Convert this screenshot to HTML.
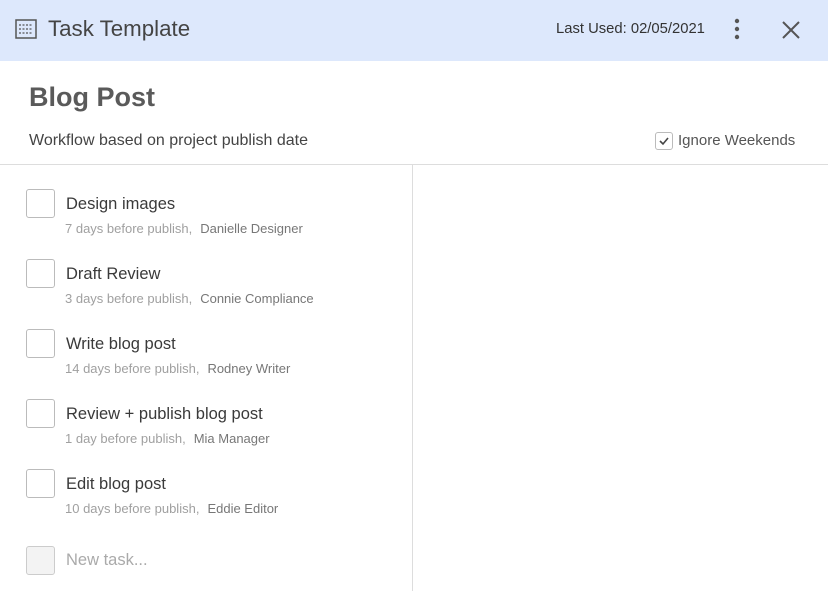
<!DOCTYPE html>
<html><head><meta charset="utf-8"><style>
*{margin:0;padding:0;box-sizing:border-box}
body{width:828px;height:591px;background:#fff;font-family:"Liberation Sans",Arial,sans-serif;position:relative;overflow:hidden;color:#444}
.hdr{position:absolute;left:0;top:0;width:828px;height:61px;background:#dde8fc}
.abs{position:absolute;white-space:nowrap}
.cb{position:absolute;left:26px;width:29px;height:29px;border:1px solid #bbb;border-radius:3px;background:#fff}
.t{position:absolute;left:66px;font-size:16.5px;color:#3a3a3a}
.s{position:absolute;left:65px;font-size:13px;color:#a0a0a0}
.s b{font-weight:normal;color:#777;margin-left:8px}
</style></head><body>
<div class="hdr"></div>
<svg class="abs" style="left:15px;top:19px" width="22" height="20" viewBox="0 0 22 20"><rect x="1" y="1" width="20" height="18" fill="none" stroke="#555" stroke-width="1.5"/><g stroke="#555" stroke-width="1.3" stroke-dasharray="2 1.5"><line x1="4" y1="6" x2="18" y2="6"/><line x1="4" y1="10" x2="18" y2="10"/><line x1="4" y1="14" x2="18" y2="14"/></g></svg>
<div class="abs" style="left:48px;top:16px;font-size:22.3px;color:#444">Task Template</div>
<div class="abs" style="left:556px;top:21px;font-size:14.8px;color:#333">Last Used: 02/05/2021</div>
<svg class="abs" style="left:733px;top:18px" width="8" height="22"><circle cx="4" cy="3" r="2.2" fill="#555"/><circle cx="4" cy="11" r="2.2" fill="#555"/><circle cx="4" cy="19" r="2.2" fill="#555"/></svg>
<svg class="abs" style="left:781px;top:20px" width="20" height="20"><path d="M2 2L18 18M18 2L2 18" stroke="#555" stroke-width="2"/></svg>
<div class="abs" style="left:29px;top:82px;font-size:27px;font-weight:bold;color:#5a5a5a">Blog Post</div>
<div class="abs" style="left:29px;top:132px;font-size:16px;color:#444">Workflow based on project publish date</div>
<div class="abs" style="left:655px;top:132px;width:18px;height:18px;border:1px solid #bbb;border-radius:3px"></div>
<svg class="abs" style="left:657px;top:134px" width="14" height="14"><path d="M3 7l3 3 5-6" stroke="#444" stroke-width="1.6" fill="none"/></svg>
<div class="abs" style="left:678px;top:132px;font-size:15px;color:#555">Ignore Weekends</div>
<div class="abs" style="left:0;top:164px;width:828px;height:1px;background:#ddd"></div>
<div class="abs" style="left:412px;top:165px;width:1px;height:426px;background:#ddd"></div>

<div class="cb" style="top:189px"></div><div class="t" style="top:195px">Design images</div><div class="s" style="top:221px">7 days before publish,<b>Danielle Designer</b></div>
<div class="cb" style="top:259px"></div><div class="t" style="top:265px">Draft Review</div><div class="s" style="top:291px">3 days before publish,<b>Connie Compliance</b></div>
<div class="cb" style="top:329px"></div><div class="t" style="top:335px">Write blog post</div><div class="s" style="top:361px">14 days before publish,<b>Rodney Writer</b></div>
<div class="cb" style="top:399px"></div><div class="t" style="top:405px">Review + publish blog post</div><div class="s" style="top:431px">1 day before publish,<b>Mia Manager</b></div>
<div class="cb" style="top:469px"></div><div class="t" style="top:475px">Edit blog post</div><div class="s" style="top:501px">10 days before publish,<b>Eddie Editor</b></div>
<div class="cb" style="top:546px;background:#f3f3f3;border-color:#ccc"></div><div class="t" style="top:551px;color:#aaa">New task...</div>
</body></html>
